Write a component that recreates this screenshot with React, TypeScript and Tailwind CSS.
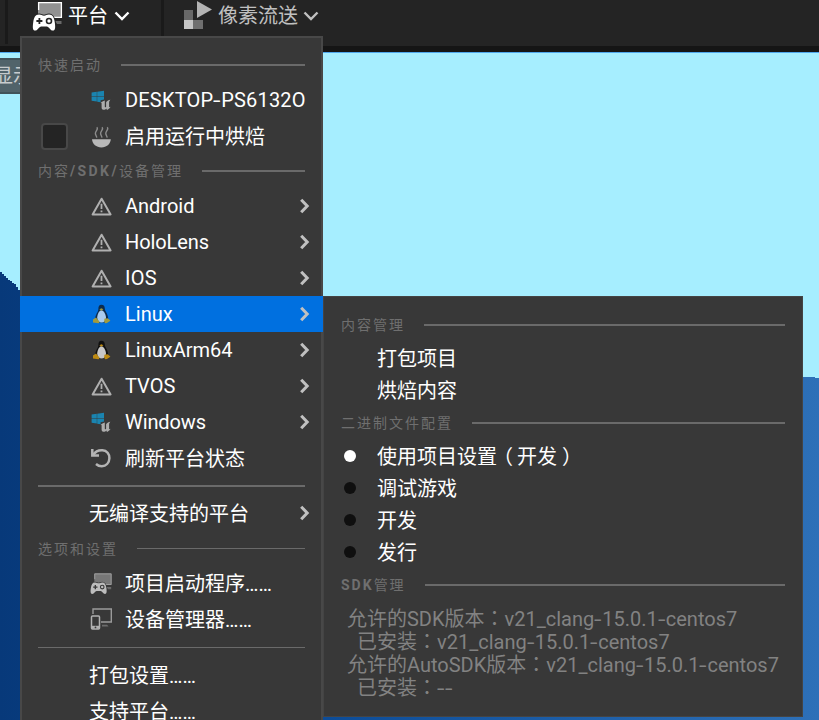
import { Fragment, type ReactNode } from 'react';

function Chevron({ className }: { className?: string }) {
  return (
    <svg className={className} width="16" height="10" viewBox="0 0 16 10" fill="none" stroke="currentColor" strokeWidth="2.4">
      <path d="M1.5 1.5L8 8L14.5 1.5" />
    </svg>
  );
}

function ChevronRight() {
  return (
    <svg width="10" height="16" viewBox="0 0 10 16" fill="none" stroke="#c0c0c0" strokeWidth="3">
      <path d="M1.2 1.7L7.2 8L1.2 14.3" />
    </svg>
  );
}

function WarningIcon() {
  return (
    <svg width="23" height="20" viewBox="0 0 23 20" fill="none" stroke="#b0b0b0">
      <path d="M11.6 2.7L20.6 18.5H2.6Z" strokeWidth="2" strokeLinejoin="round" />
      <path d="M11.5 7.8V13M11.5 14.4V16.2" strokeWidth="1.8" />
    </svg>
  );
}

function WindowsIcon() {
  return (
    <svg width="22" height="22" viewBox="0 0 22 22">
      <path d="M1.6 3.6L6.8 2.8V7.3H1.6ZM7.2 2.7L14 1.8V7.3H7.2ZM1.6 7.7H6.8V12.6L1.6 11.8ZM7.2 7.7H14V10.4L10.6 11.2V13.2L7.2 12.7Z" fill="#1a84b0" />
      <path
        d="M10.6 13.4C12 12.8 13 11.8 14.8 11.4V17.4C14.8 18.5 15.6 18.4 16.1 17.7V13.2C17.2 12 18.6 11 20.4 10.8C19.4 12 19.1 12.8 19.1 14V17.8C19.3 18.6 20 18.2 20.6 17.8C19.6 19.6 18.2 20.4 17 21L16.2 19.4C15.4 20.6 14.4 21 13.4 20.8C12 20.6 11.6 19.6 11.6 18.4V14.4C11.6 13.8 11.2 13.6 10.6 13.4Z"
        fill="#adadad"
      />
    </svg>
  );
}

function PenguinIcon({ selected }: { selected?: boolean }) {
  const body = selected ? '#0c2b4d' : '#101010';
  const belly = selected ? '#a9cbee' : '#c8c8c8';
  const feet = selected ? '#a39a3c' : '#bd8a12';
  return (
    <svg width="22" height="22" viewBox="0 0 22 22">
      <path d="M11.4 1.8C13.8 1.8 14.8 3.4 14.8 5.6C14.8 8.6 18.4 11 18.2 16.4L15 19.6H8L5.2 15.8C5.4 11.4 8.4 9 8.4 6C8.4 3.4 9 1.8 11.4 1.8Z" fill={body} />
      <path d="M11.4 7.2C13.6 7.2 16 11.4 16 14.6C16 17.6 14.2 19.6 11.6 19.6C9 19.6 7.2 17.6 7.2 14.6C7.2 11.4 9.2 7.2 11.4 7.2Z" fill={belly} />
      <path d="M9.4 6.3L11.4 5.2L13.4 6.3L11.4 7.8Z" fill={feet} />
      <path d="M6 14.4L9.4 18.4C9.4 20.2 8.2 20.4 6.8 20.1L3 19.4V16.6Z" fill={feet} />
      <path d="M14.4 15.8L17.6 15.2L20.4 17.6C19 18.8 17 20.5 15.4 20.3C14 20 14.2 17.6 14.4 15.8Z" fill={feet} />
    </svg>
  );
}

function BowlIcon() {
  return (
    <svg width="22" height="22" viewBox="0 0 22 22" fill="none">
      <path
        d="M6.8 1.2C9 3.4 5 5 5.4 7.6C5.6 9 6.4 9.8 6.8 11.6M12 1.2C14.2 3.4 10.2 5 10.6 7.6C10.8 9 11.6 9.8 12 11.6M17.2 1.2C19.4 3.4 15.4 5 15.8 7.6C16 9 16.8 9.8 17.2 11.6"
        stroke="#8c8c8c"
        strokeWidth="1.4"
      />
      <path d="M2 13.2H20.8C20.4 18 16.6 21.4 11.4 21.4C6.2 21.4 2.4 18 2 13.2Z" fill="#b8b8b8" />
    </svg>
  );
}

function RefreshIcon() {
  return (
    <svg width="22" height="22" viewBox="0 0 22 22" fill="none" stroke="#b4b4b4" strokeWidth="2.5">
      <path d="M2.3 2V8.4H9" />
      <path d="M3 8C5.2 4.6 9 3 12.4 3.2C16.8 3.4 19.6 7 19.4 11.2C19.2 16 16 19 11.8 19.2C9.6 19.2 7.6 18.4 6 17" />
    </svg>
  );
}

interface LauncherIconProps {
  size: number;
  screen: string;
  frame: string;
  pad: string;
  back: string;
}

function LauncherIcon({ size, screen, frame, pad, back }: LauncherIconProps) {
  return (
    <svg width={size} height={size} viewBox="0 0 32 32">
      <path d="M6 2H30V18H6Z" fill={screen} />
      <path d="M6.6 10V2.6H29.4V17.4H22" fill="none" stroke={frame} strokeWidth="1.3" />
      <path d="M23 21H29.5V24H25Z" fill="#6a6a6a" />
      <path
        d="M7 14.6C9.4 14.6 10 15.8 12 15.8C14 15.8 14.6 14.6 17 14.6C20.8 14.6 22 17.4 22.8 22.4C23.4 26.8 23.6 30.6 20.8 30.6C18.2 30.6 17 26.4 14.8 26.4H9.2C7 26.4 5.8 30.6 3.2 30.6C.4 30.6 .6 26.8 1.2 22.4C2 17.4 3.2 14.6 7 14.6Z"
        fill={pad}
        stroke={back}
        strokeWidth="2"
        paintOrder="stroke"
      />
      <path d="M7.4 18V24M4.4 21H10.4" stroke={back} strokeWidth="1.8" />
      <circle cx="17" cy="21" r="2.5" fill="none" stroke={back} strokeWidth="1.6" />
    </svg>
  );
}

function DevicesIcon() {
  return (
    <svg width="23" height="22" viewBox="0 0 23 22" fill="none">
      <path d="M3 6V1H21.3V14H11" stroke="#9a9a9a" strokeWidth="1.4" />
      <path d="M12 16.8H17L18.6 18.6H12Z" fill="#6c6c6c" />
      <rect x="1.5" y="8" width="8" height="13" rx="1" fill="#383838" stroke="#b0b0b0" strokeWidth="1.5" />
      <path d="M1.5 17.8H9.5V20.8H1.5Z" fill="#b0b0b0" />
      <circle cx="5.5" cy="19.4" r="0.9" fill="#383838" />
    </svg>
  );
}

function StreamIcon() {
  return (
    <svg className="mb-[2px]" width="30" height="30" viewBox="0 0 30 30">
      <path d="M1 10H10V20H1Z" fill="#686868" />
      <path d="M1 20H10V29H1Z" fill="#c6c6c6" />
      <path d="M10 20H20V29H10Z" fill="#707070" />
      <path d="M14 1L29 9.5L14 18Z" fill="#b4b4b4" />
    </svg>
  );
}

// hyphens are drawn wide in this UI font
function Wide({ text }: { text: string }) {
  return (
    <>
      {text.split('-').map((part, i) => (
        <Fragment key={i}>
          {i > 0 && <span className="inline-block w-2 origin-left scale-x-[1.35]">-</span>}
          {part}
        </Fragment>
      ))}
    </>
  );
}

function Colon() {
  return <span className="font-['Noto_Sans_CJK_TC']" lang="zh-TW">：</span>;
}

interface HeadingProps {
  children: ReactNode;
  className?: string;
  thin?: boolean;
}

function Heading({ children, className = '', thin }: HeadingProps) {
  return (
    <div className={`flex shrink-0 items-center gap-[19px] ${className}`}>
      <span className={`text-[14px] leading-none tracking-[2px] whitespace-nowrap text-[#6f6f6f] ${thin ? 'pt-[2px]' : ''}`}>
        {children}
      </span>
      <div className={`flex-1 bg-[#6a6a6a] ${thin ? 'h-px' : 'h-[2px]'}`} />
    </div>
  );
}

interface RowProps {
  icon?: ReactNode;
  label: string;
  arrow?: boolean;
  selected?: boolean;
  check?: boolean;
  flush?: boolean;
  labelClass?: string;
}

function Row({ icon, label, arrow, selected, check, flush, labelClass = '' }: RowProps) {
  return (
    <div className={`flex h-9 shrink-0 items-center ${selected ? '-mx-[2px] bg-[#0070e0] px-[2px]' : ''}`}>
      <div className="flex w-[67px] shrink-0 pl-[19px]">
        {check && <div className="mb-[2px] h-[27px] w-[27px] rounded-[4px] border-2 border-[#484848] bg-[#242424]" />}
      </div>
      {!flush && <div className="flex w-9 shrink-0 pl-[1px]">{icon}</div>}
      <span className={`flex-1 whitespace-nowrap ${labelClass}`}>
        <Wide text={label} />
      </span>
      {arrow && (
        <div className="mr-[11px]">
          <ChevronRight />
        </div>
      )}
    </div>
  );
}

const platforms: RowProps[] = [
  { label: 'Android', icon: <WarningIcon /> },
  { label: 'HoloLens', icon: <WarningIcon />, labelClass: 'tracking-[-0.1px]' },
  { label: 'IOS', icon: <WarningIcon />, labelClass: 'tracking-[0.3px]' },
  { label: 'Linux', icon: <PenguinIcon selected />, selected: true },
  { label: 'LinuxArm64', icon: <PenguinIcon /> },
  { label: 'TVOS', icon: <WarningIcon /> },
  { label: 'Windows', icon: <WindowsIcon />, labelClass: 'tracking-[-0.1px]' },
];

const configs: { key: string; label: ReactNode }[] = [
  {
    key: 'project',
    label: (
      <>
        使用项目设置<span className="-ml-1 pr-1">（</span>开发<span className="pl-[5px]">）</span>
      </>
    ),
  },
  { key: 'debug', label: '调试游戏' },
  { key: 'development', label: '开发' },
  { key: 'shipping', label: '发行' },
];

function PlatformMenu() {
  return (
    <div className="absolute top-9 left-5 flex h-[700px] w-[303px] flex-col border-2 border-[#484848] bg-[#383838] pt-[10px]">
      <Heading className="h-[34px] px-4">快速启动</Heading>
      <Row label="DESKTOP-PS6132O" icon={<WindowsIcon />} labelClass="tracking-[0.18px]" />
      <div className="h-px shrink-0" />
      <Row label="启用运行中烘焙" icon={<BowlIcon />} check />
      <Heading className="mb-px h-8 px-4">
        内容<b className="tracking-[2.4px]">/SDK/</b>设备管理
      </Heading>
      {platforms.map((p) => (
        <Row key={p.label} {...p} arrow />
      ))}
      <Row label="刷新平台状态" icon={<RefreshIcon />} labelClass="pt-px" />
      <div className="mx-4 mt-[9px] h-[2px] shrink-0 bg-[#6a6a6a]" />
      <div className="h-2 shrink-0" />
      <Row label="无编译支持的平台" flush arrow labelClass="pt-[2px]" />
      <Heading className="h-[34px] px-4" thin>
        选项和设置
      </Heading>
      <Row
        label="项目启动程序……"
        icon={<LauncherIcon size={23} screen="#777777" frame="#a0a0a0" pad="#bdbdbd" back="#383838" />}
        labelClass="pt-[2px]"
      />
      <Row label="设备管理器……" icon={<DevicesIcon />} labelClass="pt-[2px]" />
      <div className="mx-4 my-[10px] h-px shrink-0 bg-[#6a6a6a]" />
      <Row label="打包设置……" flush />
      <Row label="支持平台……" flush />
    </div>
  );
}

function LinuxSubmenu() {
  return (
    <div className="absolute top-[296px] left-[323px] h-[421px] w-[480px] border border-[#444444] bg-[#383838] pt-[11px]">
      <Heading className="h-[34px] px-[17px]">内容管理</Heading>
      <div className="flex h-8 items-center pt-[2px] pl-[53px]">打包项目</div>
      <div className="flex h-8 items-center pt-[2px] pl-[53px]">烘焙内容</div>
      <Heading className="h-[34px] px-[17px]">二进制文件配置</Heading>
      {configs.map((c, i) => (
        <div key={c.key} className="flex h-8 items-center gap-[21px] pl-5">
          <div className={`h-3 w-3 rounded-full ${i === 0 ? 'bg-white' : 'bg-[#0f0f0f]'}`} />
          <span className="pt-[2px]">{c.label}</span>
        </div>
      ))}
      <Heading className="h-[34px] px-[17px]">
        <b>SDK</b>管理
      </Heading>
      <div className="grid auto-rows-[23px] items-center pt-[5px] pl-[23px] leading-none whitespace-nowrap text-[#828282]">
        <p>
          允许的SDK版本<Colon />
          <Wide text="v21_clang-15.0.1-centos7" />
        </p>
        <p className="pl-[10px]">
          已安装<Colon />
          <Wide text="v21_clang-15.0.1-centos7" />
        </p>
        <p>
          允许的AutoSDK版本<Colon />
          <Wide text="v21_clang-15.0.1-centos7" />
        </p>
        <p className="pl-[10px]">
          已安装<Colon />
          <Wide text="--" />
        </p>
      </div>
    </div>
  );
}

export default function App() {
  return (
    <div
      lang="zh-CN"
      className="relative flex h-[720px] w-[819px] flex-col overflow-hidden bg-[#a6eeff] font-[Roboto,'Noto_Sans_CJK_SC',sans-serif] text-[20px] leading-none text-white"
    >
      {/* Toolbar */}
      <div className="flex h-[52px] shrink-0 border-b-[6px] border-[#151515] bg-[#242424]">
        <div className="ml-[5px] h-11 w-[3px] bg-[#1a1a1a]" />
        <div className="flex h-[31px] w-[153px] items-center pl-6">
          <LauncherIcon size={32} screen="#919191" frame="#ffffff" pad="#ffffff" back="#242424" />
          <span className="ml-1">平台</span>
          <Chevron className="ml-[6px]" />
        </div>
        <div className="h-11 w-[3px] bg-[#1a1a1a]" />
        <div className="flex h-[31px] items-center pl-[19px] text-[#c0c0c0]">
          <StreamIcon />
          <span className="ml-[5px]">像素流送</span>
          <Chevron className="ml-[5px]" />
        </div>
      </div>

      {/* Viewport */}
      <div className="relative flex-1 border-t border-[#4fa8ee]">
        <svg className="absolute inset-0" width="819" height="667" viewBox="0 53 819 667">
          <defs>
            <linearGradient id="hill" x1="0" x2="1">
              <stop offset="0" stopColor="#07397a" />
              <stop offset="0.4" stopColor="#0c4c98" />
              <stop offset="1" stopColor="#2d70b8" />
            </linearGradient>
          </defs>
          <path
            d="M0 272H2V274H4V276H6V278H8V280H10V281H12V283H14V284H16V287H18V290H20V296L400 377H815V378H819V720H0Z"
            fill="url(#hill)"
          />
        </svg>
        <div className="absolute top-[5px] left-[-8px] flex h-9 w-20 items-center border-2 border-[#41535a] bg-[#51636a] text-[#c8ccce]">
          <span className="-ml-px">显示</span>
        </div>
      </div>

      <PlatformMenu />
      <LinuxSubmenu />
    </div>
  );
}
